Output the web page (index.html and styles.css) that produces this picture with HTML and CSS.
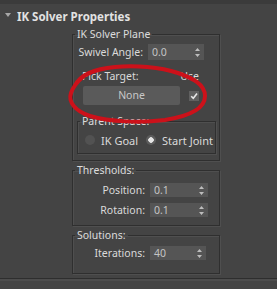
FILE: index.html
```html
<!DOCTYPE html>
<html>
<head>
<meta charset="utf-8">
<link rel="stylesheet" href="styles.css">
</head>
<body>
<div class="topbar"></div>
<div class="rollout-head"><span class="tri"></span><span class="rtitle">IK Solver Properties</span></div>
<div class="rollout-body">
  <fieldset class="group g-plane">
    <legend>IK Solver Plane</legend>
    <div class="row spin-row swivel"><span class="lbl">Swivel Angle:</span><div class="spinner w56"><span>0.0</span><svg class="arr" width="5" height="9" viewBox="0 0 5 9"><path d="M2.5 0 L5 3 L0 3Z M0 6 L5 6 L2.5 9Z" fill="#bdbdbd"/></svg></div></div>
    <div class="row pick-head"><span>Pick Target:</span><span>Use</span></div>
    <div class="row pick-row"><div class="btn">None</div><div class="check"><svg width="10" height="10" viewBox="0 0 10 10"><path d="M2.2 5.2 L4.3 7.3 L8 2.6" fill="none" stroke="#e8e8e8" stroke-width="1.6"/></svg></div></div>
    <fieldset class="group g-parent">
      <legend>Parent Space:</legend>
      <div class="radios">
        <span class="radio"></span><span class="rlabel">IK Goal</span>
        <span class="radio on"></span><span class="rlabel">Start Joint</span>
      </div>
    </fieldset>
  </fieldset>
  <fieldset class="group g-thr">
    <legend>Thresholds:</legend>
    <div class="row spin-row"><span class="lbl">Position:</span><div class="spinner w58"><span>0.1</span><svg class="arr" width="5" height="9" viewBox="0 0 5 9"><path d="M2.5 0 L5 3 L0 3Z M0 6 L5 6 L2.5 9Z" fill="#bdbdbd"/></svg></div></div>
    <div class="row spin-row rot"><span class="lbl">Rotation:</span><div class="spinner w58"><span>0.1</span><svg class="arr" width="5" height="9" viewBox="0 0 5 9"><path d="M2.5 0 L5 3 L0 3Z M0 6 L5 6 L2.5 9Z" fill="#bdbdbd"/></svg></div></div>
  </fieldset>
  <fieldset class="group g-sol">
    <legend>Solutions:</legend>
    <div class="row spin-row iter"><span class="lbl">Iterations:</span><div class="spinner w56"><span>40</span><svg class="arr" width="5" height="9" viewBox="0 0 5 9"><path d="M2.5 0 L5 3 L0 3Z M0 6 L5 6 L2.5 9Z" fill="#bdbdbd"/></svg></div></div>
  </fieldset>
</div>
<div class="bottombar"></div>
<svg class="annot" width="277" height="289" viewBox="0 0 277 289"><path d="M74 87 C80 74 95 69 115 67 C135 65 160 67 178 73 C192 78 205 84 205 96 C205 108 190 116 165 120 C140 123 110 122 90 116 C75 111 68 102 71 93 C73 87 78 81 84 76" fill="none" stroke="#cc111a" stroke-width="4" stroke-linecap="round"/></svg>
</body>
</html>
```
FILE: styles.css
```css
html, body {
  margin: 0;
  padding: 0;
}
body {
  width: 277px;
  height: 289px;
  overflow: hidden;
  background: #444444;
  font-family: "Noto Sans", "Open Sans", sans-serif;
  font-size: 10.5px;
  color: #dadada;
  position: relative;
  white-space: nowrap;
}
.topbar {
  height: 4px;
  background: #3b3b3b;
}
.rollout-head {
  height: 24px;
  display: flex;
  align-items: center;
  padding-left: 5px;
}
.tri {
  width: 0;
  height: 0;
  border-left: 3px solid transparent;
  border-right: 3px solid transparent;
  border-top: 4px solid #a8a8a8;
  margin-right: 6px;
  margin-top: -2px;
}
.rtitle {
  font-weight: bold;
  font-size: 11.5px;
  color: #e2e2e2;
}
.rollout-body {
  padding-left: 72px;
}
.group {
  margin: 0;
  border: 1px solid #2f2f2f;
  box-shadow: 1px 1px 0 #4f4f4f, inset 1px 1px 0 #4f4f4f;
  min-width: 0;
  box-sizing: border-box;
}
.group legend {
  padding: 0 2px;
  margin-left: -2px;
  line-height: 12px;
  height: 12px;
  color: #dcdcdc;
}
.g-plane {
  width: 148px;
  padding: 0 3px 3px 4px;
}
.row {
  display: flex;
  align-items: center;
}
.spin-row {
  justify-content: flex-end;
  height: 16px;
}
.swivel {
  margin-top: 4px;
  padding-right: 12px;
}
.lbl {
  margin-right: 5px;
  flex-shrink: 0;
}
.spinner {
  flex-shrink: 0;
  height: 100%;
  background: #555555;
  display: flex;
  align-items: center;
  justify-content: space-between;
  box-sizing: border-box;
  padding: 0 4px 0 4px;
  color: #c4c4c4;
}
.w56 { width: 56px; }
.w58 { width: 58px; }
.pick-head {
  margin-top: 10px;
  height: 12px;
  justify-content: space-between;
  padding: 0 17px 0 5px;
}
.pick-row {
  margin-top: 4px;
  height: 19px;
  padding-left: 6px;
}
.btn {
  width: 97px;
  height: 19px;
  line-height: 19px;
  text-align: center;
  background: #5a5a5a;
  border-radius: 2px;
  color: #c8c8c8;
}
.check {
  width: 10px;
  height: 10px;
  background: #606060;
  margin-left: 9px;
  display: flex;
}
.g-parent {
  width: 139px;
  margin-top: 10px;
  margin-bottom: 3px;
  padding: 6px 0 6px 4px;
}
.radios {
  display: flex;
  align-items: center;
  height: 14px;
}
.radio {
  width: 10px;
  height: 10px;
  border-radius: 50%;
  background: #525252;
  box-sizing: border-box;
  margin-left: 3px;
}
.radio.on {
  background: radial-gradient(circle, #e6e6e6 0 2.5px, #5c5c5c 3px);
  margin-left: 8px;
}
.rlabel {
  margin-left: 6px;
  font-size: 11px;
}
.g-thr {
  width: 148px;
  margin-top: 3px;
  padding: 7px 11px 8px 4px;
}
.g-thr .spin-row {
  height: 14px;
}
.g-thr .rot {
  margin-top: 6px;
}
.g-sol {
  width: 148px;
  margin-top: 3px;
  padding: 5px 13px 13px 4px;
}
.g-sol .spin-row {
  height: 14px;
}
.bottombar {
  margin-top: 4px;
  height: 1px;
  background: #2e2e2e;
  border-bottom: 2px solid #4d4d4d;
}
.annot {
  position: absolute;
  left: 0;
  top: 0;
  pointer-events: none;
}
```
